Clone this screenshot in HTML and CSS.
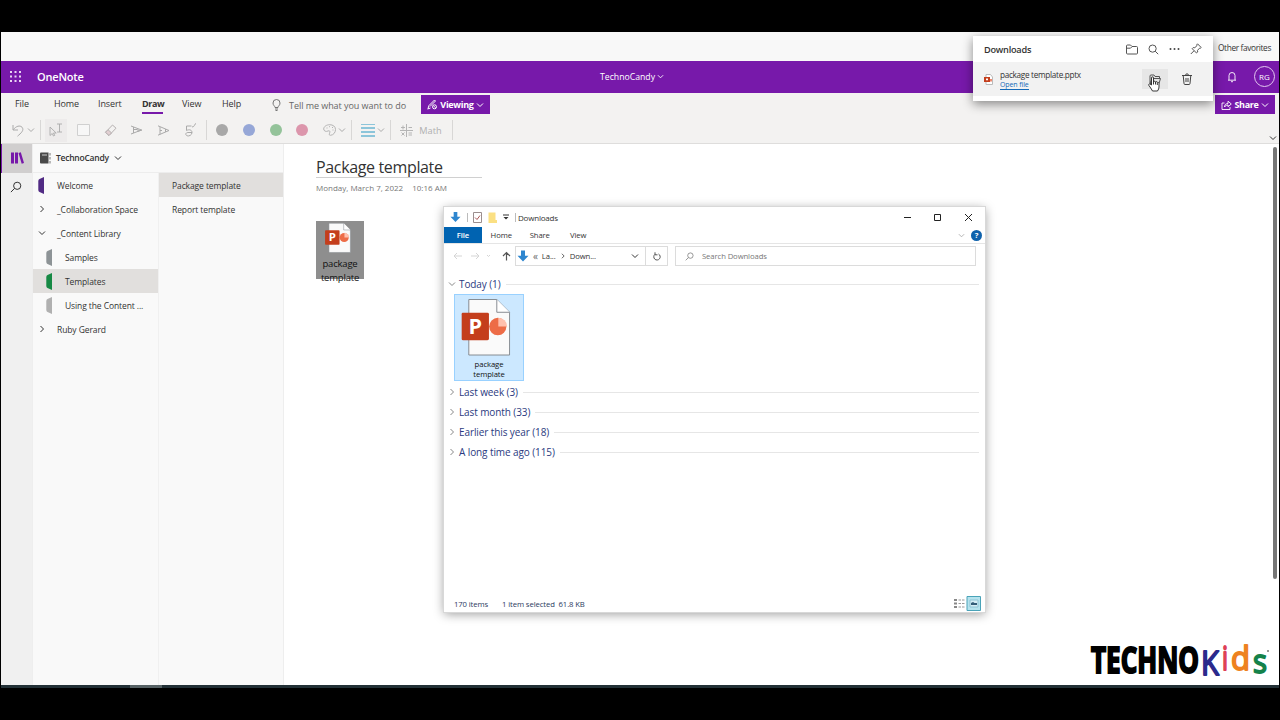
FILE: index.html
```html
<!DOCTYPE html>
<html lang="en">
<head>
    <meta charset="UTF-8">
    <meta name="viewport" content="width=device-width, initial-scale=1.0">
    <title>OneNote - TechnoCandy</title>
    <link rel="stylesheet" href="styles.css">
</head>
<body>

<svg width="0" height="0" class="defs">
    <symbol id="down" viewBox="0 0 8 8"><path d="M1 2.5l3 3 3-3" fill="none" stroke="currentColor"/></symbol>
    <symbol id="right" viewBox="0 0 8 8"><path d="M2.5 1l3 3-3 3" fill="none" stroke="currentColor"/></symbol>
    <symbol id="tab" viewBox="0 0 6 17"><path d="M6 0L1.500 2Q.3 2.500 .3 4v9q0 1.500 1.200 2L6 17z" fill="currentColor"/></symbol>
    <symbol id="lens" viewBox="0 0 12 12"><g fill="none" stroke="currentColor"><circle cx="7.2" cy="4.8" r="3.6"/><path d="M4.5 7.5L.9 11.1"/></g></symbol>
    <symbol id="arrow" viewBox="0 0 12 12"><path d="M4 .5h4v5.300h3.500L6 11.500.5 5.800H4z" fill="#2e86cf"/></symbol>
    <symbol id="ppt" viewBox="0 0 50 58">
        <path d="M7.500 .5h28.500l13 13v43.500h-41.500z" fill="#fafafa" stroke="#858a90"/>
        <path d="M36 .5v13h13" fill="#fff" stroke="#858a90"/>
        <circle cx="37" cy="28" r="8.800" fill="#ed6c47"/>
        <path d="M37.500 28v-9a9 9 0 0 1 9 9z" fill="#ffc0ad"/>
        <rect x="0" y="14" width="28" height="28" rx="1.500" fill="#c43e1c"/>
    </symbol>
</svg>

<div class="screen">
    <div class="browser-bar"><span>Other favorites</span></div>

    <header class="topbar">
        <svg class="waffle" width="11" height="11" viewBox="0 0 11 11" fill="#e9d5f3"><path d="M0 0h2v2H0zM4.500 0h2v2h-2zM9 0h2v2H9zM0 4.500h2v2H0zM4.500 4.500h2v2h-2zM9 4.500h2v2H9zM0 9h2v2H0zM4.500 9h2v2h-2zM9 9h2v2H9z"/></svg>
        <span class="app-name">OneNote</span>
        <span class="notebook-title">TechnoCandy <svg width="7" height="7"><use href="#down"/></svg></span>
        <svg class="bell" width="10" height="12" viewBox="0 0 10 12" fill="none" stroke="#fff" stroke-width=".9"><path d="M1 9.200h8M2 9V4.500a3 3 0 0 1 6 0V9M4 10.700h2"/></svg>
        <span class="avatar">RG</span>
    </header>

    <nav class="tabs">
        <span>File</span><span>Home</span><span>Insert</span><span class="active">Draw</span><span>View</span><span>Help</span>
        <svg width="9" height="12" viewBox="0 0 9 12" fill="none" stroke="#666" stroke-width=".9"><path d="M3 8.500C3 7 1 6.500 1 4a3.500 3.500 0 0 1 7 0c0 2.500-2 3-2 4.500zM3 10h3M3.500 11.500h2"/></svg>
        <span class="tell">Tell me what you want to do</span>
        <span class="viewing">
            <svg width="11" height="11" viewBox="0 0 11 11" fill="none" stroke="#fff"><path d="M1 9.500l1-3L7.500 1l1 1L3 7.500M.5 10l3-1"/><circle cx="7.500" cy="7.800" r="2"/><path d="M6.500 6.800l2 2"/></svg>
            Viewing
            <svg width="8" height="8"><use href="#down"/></svg>
        </span>
        <span class="share">
            <svg width="11" height="10" viewBox="0 0 11 10" fill="none" stroke="#fff" stroke-width=".9"><path d="M3.500 3H1v6.500h8V7M3.500 7c0-2.500 1.500-3.500 3.500-3.500V1.200L10.300 4 7 6.700V5C5.500 5 4.500 5.500 3.500 7z"/></svg>
            Share
            <svg width="8" height="8"><use href="#down"/></svg>
        </span>
    </nav>

    <div class="tools">
        <svg width="13" height="13" viewBox="0 0 13 13" fill="none" stroke="#aaa"><path d="M1 1v5h5M1.300 5.700C4 2 8 1 10 3.200c2.500 3-1 6-4.500 9"/></svg>
        <svg width="8" height="8" class="pale"><use href="#down"/></svg>
        <i class="sep"></i>
        <span class="picked"><svg width="14" height="14" viewBox="0 0 14 14" fill="none" stroke="#a9a9a9" stroke-width=".9"><path d="M1 4v8.500l2.200-2 1.300 2.500 1.200-.6-1.200-2.400h2.700zM8 1h5M8 9h5M10.500 1v8"/></svg></span>
        <svg width="13" height="12" viewBox="0 0 13 12" fill="#f7f7f7" stroke="#d0d0d0"><path d="M.5.5h12v11H.5z"/></svg>
        <svg width="13" height="13" viewBox="0 0 13 13" fill="none" stroke="#b5b0b0"><path d="M8.500 1L12 4.200 5 11.500 1.500 8.300z"/><path d="M4 5.700l3.500 3.200L5 11.500 1.500 8.300z" fill="#e2cfd2"/></svg>
        <svg width="13" height="10" viewBox="0 0 13 10" fill="none" stroke="#aaa"><path d="M1 1l10.500 4L1 9M3.500 2v6M3.500 4.500h4M8 4.200v2l4-1.200"/></svg>
        <svg width="13" height="11" viewBox="0 0 13 11" fill="none" stroke="#aaa"><path d="M1 .8l11 4.700L1 10.200M3 2v7.500M3 5.500h2M8.500 4v3"/></svg>
        <svg width="13" height="14" viewBox="0 0 13 14" fill="none" stroke="#aaa"><path d="M7.500 3H2.500v4.500c3-1.500 5.500-.5 5.500 2S5 13.500 3.200 12.800C1 12 1.500 9.500 4 9.500h4M8 4c3 0 2-3 4-3.500"/></svg>
        <i class="sep"></i>
        <b class="pen gray"></b>
        <b class="pen blue"></b>
        <b class="pen green"></b>
        <b class="pen pink"></b>
        <svg class="palette" width="14" height="12" viewBox="0 0 14 12" fill="none" stroke="#b3b3b3"><path d="M5 7C3 8 .7 7 .7 5c0-2.500 3-4.300 6-4.300C10 .7 12.500 2.500 12.500 5.500s-2 5.500-5 5.800c-2 .1-1-1.800-.7-3S6.500 6.300 5 7z"/><path d="M3.500 4h1M6 2.700h1M9 3.500h1M9.500 6h1"/></svg>
        <svg width="8" height="8" class="pale"><use href="#down"/></svg>
        <i class="sep"></i>
        <svg class="lines" width="14" height="13" viewBox="0 0 14 13" fill="#8cc5da"><path d="M0 0h14v1H0zM0 3h14v2H0zM0 7h14v2H0zM0 11h14v2H0z"/></svg>
        <svg width="8" height="8" class="pale"><use href="#down"/></svg>
        <i class="sep"></i>
        <svg width="13" height="13" viewBox="0 0 13 13" fill="none" stroke="#b5b5b5"><path d="M0 6.500h13M6.500 0v13M1 3.500h4M3 1.500v4M8.500 3.500H12M1.500 8.500l3 3M4.500 8.500l-3 3M8.500 9h3.500M8.500 11H12"/></svg>
        <span class="math">Math</span>
        <i class="sep"></i>
        <svg width="8" height="8" class="collapse"><use href="#down"/></svg>
    </div>

    <div class="workspace">
        <aside class="rail">
            <div class="rail-on"><svg width="13" height="12" viewBox="0 0 13 12" fill="#7719aa"><path d="M0 .5h3v11H0zM4 .5h3v11H4zM7.500 1L9.800.3 13 11l-2.300.7z"/></svg></div>
            <svg width="12" height="12" class="rail-lens"><use href="#lens"/></svg>
        </aside>

        <aside class="nav">
            <div class="notebook">
                <svg width="11" height="12" viewBox="0 0 11 12"><path d="M0 1.500Q0 .5 1 .5h7.500v11H1q-1 0-1-1z" fill="#4a4a4a"/><path d="M2 3h5" stroke="#ccc"/><path d="M10 1v2.500M10 5v2.500M10 9v2.500" stroke="#777"/></svg>
                <span>TechnoCandy</span>
                <svg width="8" height="8"><use href="#down"/></svg>
            </div>
            <div class="lists">
                <div class="sections">
                    <div class="row purple"><svg width="6" height="17"><use href="#tab"/></svg><span>Welcome</span></div>
                    <div class="row"><svg width="8" height="8"><use href="#right"/></svg><span>_Collaboration Space</span></div>
                    <div class="row"><svg width="8" height="8"><use href="#down"/></svg><span>_Content Library</span></div>
                    <div class="row child slate"><svg width="6" height="17"><use href="#tab"/></svg><span>Samples</span></div>
                    <div class="row child leaf on"><svg width="6" height="17"><use href="#tab"/></svg><span>Templates</span></div>
                    <div class="row child silver"><svg width="6" height="17"><use href="#tab"/></svg><span>Using the Content ...</span></div>
                    <div class="row"><svg width="8" height="8"><use href="#right"/></svg><span>Ruby Gerard</span></div>
                </div>
                <div class="pages">
                    <div class="page on">Package template</div>
                    <div class="page">Report template</div>
                </div>
            </div>
        </aside>

        <main class="note">
            <h1>Package template</h1>
            <p class="date"><span>Monday, March 7, 2022</span><span>10:16 AM</span></p>
            <div class="attachment">
                <svg width="26" height="30" viewBox="0 0 50 58"><use href="#ppt"/><text x="14" y="35.500" text-anchor="middle" class="ppt-letter">P</text></svg>
                <span>package<br>template</span>
            </div>
        </main>
        <div class="scrollbar"></div>
    </div>
    <div class="taskbar"><i></i></div>

    <section class="explorer">
        <div class="title-bar">
            <svg width="11" height="12"><use href="#arrow"/></svg>
            <i></i>
            <svg width="9" height="11" viewBox="0 0 9 11" fill="#fff" stroke="#9b8e8e"><path d="M.5.500h8v10h-8z"/><path d="M2 5.500l2 2 3-4" stroke="#a55" fill="none"/></svg>
            <svg width="9" height="11" viewBox="0 0 9 11"><path d="M.5.500h7V8H9v3H.5z" fill="#fbe083"/></svg>
            <svg width="6" height="6" viewBox="0 0 6 6"><path d="M0 .5h6v1H0zM.5 3h5L3 5.500z" fill="#333"/></svg>
            <i></i>
            <span>Downloads</span>
            <svg class="controls" width="68" height="9" viewBox="0 0 68 9" fill="none" stroke="#222"><path d="M0 4.500h7M30.500 1.500h6v6h-6zM61 1l7 7M68 1l-7 7"/></svg>
        </div>
        <div class="menu">
            <span class="file">File</span><span>Home</span><span>Share</span><span>View</span>
            <svg width="7" height="7"><use href="#down"/></svg>
            <b>?</b>
        </div>
        <div class="address">
            <svg class="arrows" width="60" height="10" viewBox="0 0 60 10" fill="none" stroke="#d5d5d5"><path d="M9 5H1M4 2L1 5l3 3M18 5h8M23 2l3 3-3 3M34 4l1.500 1.500L37 4"/><path d="M53.500 9.500V1.500M50 5l3.500-3.500L57 5" stroke="#555" stroke-width="1.200"/></svg>
            <div class="path">
                <svg width="12" height="12"><use href="#arrow"/></svg>
                <span class="q">«</span><span>La...</span><svg width="6" height="6"><use href="#right"/></svg><span>Down...</span>
                <svg width="8" height="8" class="drop"><use href="#down"/></svg>
            </div>
            <div class="refresh"><svg width="8" height="9" viewBox="0 0 8 9" fill="none" stroke="#555"><path d="M2 2.300A3.200 3.200 0 1 0 5.500 2M2 .3v2.500h2.500"/></svg></div>
            <div class="search"><svg width="9" height="9"><use href="#lens"/></svg><span>Search Downloads</span></div>
        </div>
        <div class="group first"><svg width="8" height="8"><use href="#down"/></svg><span>Today (1)</span><hr></div>
        <div class="tile">
            <svg width="50" height="57" viewBox="0 0 50 58"><use href="#ppt"/><text x="14" y="35.500" text-anchor="middle" class="ppt-letter">P</text></svg>
            <span>package<br>template</span>
        </div>
        <div class="group"><svg width="8" height="8"><use href="#right"/></svg><span>Last week (3)</span><hr></div>
        <div class="group"><svg width="8" height="8"><use href="#right"/></svg><span>Last month (33)</span><hr></div>
        <div class="group"><svg width="8" height="8"><use href="#right"/></svg><span>Earlier this year (18)</span><hr></div>
        <div class="group"><svg width="8" height="8"><use href="#right"/></svg><span>A long time ago (115)</span><hr></div>
        <div class="status">
            <span>170 items</span><span>1 item selected&nbsp; 61.8 KB</span>
            <svg width="28" height="15" viewBox="0 0 28 15"><path d="M1 4h3M1 7.500h3M1 11h3" stroke="#888" stroke-width="2"/><path d="M5.500 4h6M5.500 7.500h6M5.500 11h6" stroke="#999" stroke-dasharray="2.500 1"/><path d="M14 .5h13.500v14H14z" fill="#b5e3ee" stroke="#4aa3b8"/><path d="M17 4h8v7h-8z" fill="#d5edf5" stroke="#8fc3d4"/><path d="M18 9V7l2-1 1.500 1H24v2z" fill="#345d78"/></svg>
        </div>
    </section>

    <section class="downloads">
        <div class="dl-head">
            <span>Downloads</span>
            <svg width="12" height="11" viewBox="0 0 12 11" fill="none" stroke="#555"><path d="M.5 9V2q0-1 1-1h3L6 2.500h4.500q1 0 1 1V9q0 1-1 1h-9q-1 0-1-1zM.5 4.200h4L6 2.700"/></svg>
            <svg width="11" height="11" viewBox="0 0 11 11" fill="none" stroke="#555"><circle cx="4.600" cy="4.600" r="3.600"/><path d="M7.200 7.200l3 3"/></svg>
            <svg width="11" height="11" viewBox="0 0 11 11" fill="#444"><circle cx="1.500" cy="5" r="1"/><circle cx="5.500" cy="5" r="1"/><circle cx="9.500" cy="5" r="1"/></svg>
            <svg width="12" height="12" viewBox="0 0 12 12" fill="none" stroke="#555"><path d="M7.500.8l3.700 3.700-1 .8-.7-.1-2 2.200.2 1.600-1.200 1L2.200 5.700l1-1.100 1.600.1L7 2.600l-.2-.8zM4 7.800L.8 11"/></svg>
        </div>
        <div class="dl-item">
            <svg width="9" height="11" viewBox="0 0 9 11"><path d="M2 .5h4.500L8.500 3v7.500H2z" fill="#fff" stroke="#bbb"/><path d="M0 3h6v5H0z" fill="#c43e1c"/><path d="M2 4.500h2v1.700H2z" fill="#fff"/><path d="M6 5h2v2.500H6z" fill="#ed8a70"/></svg>
            <p><span>package template.pptx</span><a>Open file</a></p>
            <div class="folder-btn">
                <svg width="12" height="11" viewBox="0 0 12 11" fill="none" stroke="#555"><path d="M1 9V2q0-1 1-1h3l1 1.500h4.500V5M1 9.500L3 4.500h8.500L10 9.500z"/></svg>
                <svg class="hand" width="12" height="16" viewBox="0 0 12 16" fill="#fff" stroke="#222" stroke-width=".9"><path d="M3.500 9V2q0-1.200 1-1.200t1 1.200v4q.2-.8 1-.8t1 .9q.3-.6 1-.5.800.1.800 1 .3-.4.900-.3.800.2.800 1.200v3.500q0 2-1.500 4h-5C3.500 13 2 11 .8 9.300.3 8.500 1.200 7.500 2 8zM5.500 6v2.500M7.500 6v2.500M9.300 7v2"/></svg>
            </div>
            <svg width="10" height="12" viewBox="0 0 10 12" fill="none" stroke="#444"><path d="M0 2.500h10M3.500 2.500q0-1.700 1.500-1.700t1.500 1.700M1.200 2.500l.8 8q.1 1 1 1h4q.9 0 1-1l.8-8M4 5v4M6 5v4"/></svg>
        </div>
    </section>

    <svg class="brand" width="184" height="52" viewBox="0 0 184 52">
        <text x="2" y="38" textLength="108" lengthAdjust="spacingAndGlyphs" class="techno">TECHNO</text>
        <g class="kids">
            <text x="112" y="40" textLength="18" lengthAdjust="spacingAndGlyphs" fill="#2b2a8c" stroke="#2b2a8c">K</text>
            <text x="133" y="35" textLength="6" lengthAdjust="spacingAndGlyphs" fill="#de3f55" stroke="#de3f55">i</text>
            <text x="142" y="35" textLength="19" lengthAdjust="spacingAndGlyphs" fill="#ee8220" stroke="#ee8220">d</text>
            <text x="164" y="38" textLength="14" lengthAdjust="spacingAndGlyphs" fill="#14824a" stroke="#14824a">s</text>
        </g>
        <circle cx="179" cy="16" r="1" fill="#777"/>
    </svg>
</div>

</body>
</html>
```
FILE: styles.css
```css
* {
    box-sizing: border-box;
}
body {
    margin: 0;
    padding: 32px 1px;
    height: 720px;
    overflow: hidden;
    background-color: #000;
    font-family: "Open Sans", "Noto Sans", sans-serif;
    font-size: 8.5px;
    color: #333;
}
svg {
    display: block;
    flex: none;
}
span {
    white-space: nowrap;
}
.defs {
    position: absolute;
}
.ppt-letter {
    font: bold 22px "Open Sans", sans-serif;
    fill: #fff;
}
.screen {
    position: relative;
    height: 656px;
    display: flex;
    flex-direction: column;
    background-color: #fff;
}
.browser-bar {
    height: 29px;
    padding: 10px 8px 0 0;
    text-align: right;
    background-color: #f8f8f8;
    font-size: 8.3px;
    letter-spacing: -.35px;
}

/* purple header */
.topbar {
    height: 32px;
    display: flex;
    align-items: center;
    padding: 0 4px 1px 9px;
    background-color: #7719aa;
    color: #fff;
}
.app-name {
    margin-left: 16px;
    width: 563px;
    font-size: 11px;
    font-weight: 600;
    letter-spacing: -.2px;
}
.notebook-title {
    display: flex;
    align-items: center;
    gap: 2px;
    font-size: 8.7px;
}
.bell {
    margin-left: auto;
    margin-right: 17px;
}
.avatar {
    width: 21px;
    height: 21px;
    border: 1px solid #e3c8f0;
    border-radius: 50%;
    text-align: center;
    line-height: 20px;
    font-size: 8px;
}

/* ribbon */
.tabs {
    height: 25px;
    display: grid;
    grid-template-columns: 39px 44px 44px 40px 40px 50px 17px 132px 69px 1fr;
    align-items: center;
    padding: 0 0 2px 14px;
    background-color: #f3f2f1;
    font-size: 9px;
    letter-spacing: -.1px;
}
.tabs > span {
    height: 20px;
    line-height: 18px;
}
.tabs .active {
    width: 21px;
    font-weight: 700;
    letter-spacing: -.4px;
    border-bottom: 2px solid #7719aa;
    line-height: 18px;
    height: 19px;
}
.tabs .tell {
    color: #666;
    line-height: 21px;
    letter-spacing: -.05px;
}
.tabs .viewing, .tabs .share {
    display: flex;
    align-items: center;
    justify-content: center;
    gap: 2px;
    height: 19px;
    background-color: #7719aa;
    color: #fff;
    font-weight: 700;
    letter-spacing: -.3px;
}
.tabs .share {
    width: 60px;
    justify-self: end;
    margin-right: 4px;
}
.tools {
    height: 26px;
    display: grid;
    grid-template-columns: 16px 10px 9px 22px 32px 22px 30px 24px 30px 2px 30px 24px 30px 22px 24px 10px 8px 21px 10px 8px 24px 25px 18px 1fr;
    align-items: center;
    justify-items: center;
    padding: 0 0 1px 9px;
    background-color: #f3f2f1;
    border-bottom: 1px solid #dedddc;
}
.pale {
    color: #aaa;
}
.sep {
    width: 1px;
    height: 20px;
    background-color: #d8d7d6;
}
.picked {
    width: 22px;
    height: 23px;
    display: grid;
    place-items: center;
    background-color: #edebeb;
}
.pen {
    width: 12px;
    height: 12px;
    border-radius: 50%;
}
.gray {
    background-color: #a8a8a8;
}
.blue {
    background-color: #96a7d7;
}
.green {
    background-color: #94c39a;
}
.pink {
    background-color: #dc96ac;
}
.palette {
    margin-left: 10px;
}
.lines {
    margin-left: 5px;
}
.math {
    color: #b0b0b0;
    font-size: 9.2px;
}
.collapse {
    justify-self: end;
    align-self: end;
    margin-right: 2px;
}

/* notebook area */
.workspace {
    height: 541px;
    display: flex;
}
.rail {
    width: 31px;
    background-color: #f0f0f0;
}
.rail-on {
    height: 29px;
    display: grid;
    place-items: center;
    padding: 0 0 1px 0;
    background-color: #d0cece;
    border-left: 1px solid #7719aa;
}
.rail-lens {
    margin: 8px 0 0 9px;
}
.nav {
    width: 252px;
    background-color: #f9f9f9;
    border-right: 1px solid #eee;
    border-left: 1px solid #eee;
    display: flex;
    flex-direction: column;
}
.notebook {
    height: 29px;
    display: flex;
    align-items: center;
    padding: 0 0 1px 7px;
    border-bottom: 1px solid #ededed;
    font-weight: 600;
}
.notebook span {
    margin: 0 5px 0 5px;
    letter-spacing: -.25px;
}
.lists {
    flex: 1;
    display: flex;
    letter-spacing: -.1px;
}
.sections {
    width: 126px;
    border-right: 1px solid #f0f0f0;
}
.row {
    height: 24px;
    display: flex;
    align-items: center;
    padding-left: 5px;
}
.row svg + span {
    margin-left: 11px;
}
.row svg[width="6"] + span {
    margin-left: 13px;
}
.row.child {
    padding-left: 13px;
}
.purple svg {
    color: #512b84;
}
.slate svg {
    color: #8d9396;
}
.leaf svg {
    color: #168944;
}
.silver svg {
    color: #b0b0b0;
}
.on {
    background-color: #e1dfdd;
}
.pages {
    flex: 1;
}
.page {
    height: 24px;
    line-height: 25px;
    padding-left: 13px;
}
.note {
    flex: 1;
    padding: 12px 0 0 32px;
}
.note h1 {
    width: 166px;
    height: 22px;
    margin: 0;
    border-bottom: 1px solid #d0d0d0;
    font: 16px/22px "Open Sans", sans-serif;
    letter-spacing: -.35px;
    white-space: nowrap;
}
.date {
    margin: 3px 0 0;
    display: flex;
    gap: 9px;
    color: #777;
    line-height: 13px;
    font-size: 8px;
}
.attachment {
    width: 48px;
    height: 58px;
    margin-top: 27px;
    display: flex;
    flex-direction: column;
    align-items: center;
    padding-top: 2px;
    background-color: #8e8e8e;
    color: #111;
    text-align: center;
    font-size: 9.5px;
    letter-spacing: -.2px;
    line-height: 14px;
}
.attachment svg {
    margin: 0 4px 4px 0;
}
.scrollbar {
    width: 4px;
    height: 432px;
    margin: 3px 2px 0 0;
    border-radius: 2px;
    background-color: #777;
}
.taskbar {
    height: 3px;
    background-color: #223036;
}
.taskbar i {
    display: block;
    width: 32px;
    height: 3px;
    margin-left: 129px;
    background-color: #566164;
}

/* file explorer window */
.explorer {
    position: absolute;
    left: 443px;
    top: 175px;
    width: 541px;
    height: 405px;
    display: flex;
    flex-direction: column;
    background-color: #fff;
    box-shadow: 0 0 0 1px #d8d8d8, 0 2px 10px rgba(0, 0, 0, .4);
    font-size: 7.7px;
    letter-spacing: -.1px;
}
.title-bar {
    height: 20px;
    display: flex;
    align-items: center;
    gap: 6px;
    padding: 0 13px 0 6px;
}
.title-bar i {
    width: 1px;
    height: 9px;
    margin-right: -1px;
    background-color: #bbb;
}
.title-bar i + span {
    margin-left: -3px;
    font-size: 8px;
    letter-spacing: -.2px;
}
.controls {
    margin-left: auto;
}
.menu {
    height: 17px;
    display: flex;
    align-items: center;
    padding-right: 3px;
    border-bottom: 1px solid #e5e5e5;
}
.menu span {
    width: 38.5px;
    text-align: center;
}
.menu .file {
    width: 38px;
    height: 16px;
    line-height: 16px;
    background-color: #0063b1;
    color: #fff;
    font-weight: 600;
}
.menu svg {
    margin-left: auto;
    margin-right: 6px;
    color: #aaa;
}
.menu b {
    width: 11px;
    height: 11px;
    border-radius: 50%;
    background-color: #0f62ac;
    color: #fff;
    text-align: center;
    line-height: 11px;
}
.address {
    height: 20px;
    display: flex;
    align-items: center;
    margin: 2px 9px 0 9px;
}
.path, .refresh, .search {
    height: 20px;
    border: 1px solid #dcdcdc;
    display: flex;
    align-items: center;
}
.path {
    width: 131px;
    margin-left: 2px;
    padding: 0 6px 0 1px;
    gap: 4px;
}
.path .q {
    color: #666;
    font-size: 10px;
    line-height: 10px;
}
.drop {
    margin-left: auto;
}
.refresh {
    width: 22px;
    border-left: 0;
    justify-content: center;
}
.search {
    flex: 1;
    margin-left: 7px;
    padding-left: 9px;
    gap: 8px;
    color: #777;
}
.group {
    height: 20px;
    display: flex;
    align-items: center;
    padding: 0 6px 0 4px;
    color: #2b3a80;
    font-size: 10px;
}
.group svg {
    margin-right: 3px;
    color: #888;
}
.group hr {
    flex: 1;
    margin: 0 0 0 5px;
    border: 0;
    border-top: 1px solid #e6e6e6;
}
.first {
    margin-top: 8px;
}
.tile {
    width: 70px;
    height: 87px;
    margin: 0 0 1px 10px;
    display: flex;
    flex-direction: column;
    align-items: center;
    padding-top: 4px;
    background-color: #cce8ff;
    border: 1px solid #99d1ff;
    color: #111;
    text-align: center;
    line-height: 10px;
}
.tile svg {
    margin: 0 7px 3px 0;
}
.status {
    height: 17px;
    margin-top: auto;
    display: flex;
    align-items: center;
    gap: 14px;
    padding: 0 4px 0 10px;
    color: #2b3a60;
}
.status svg {
    margin-left: auto;
}

/* browser downloads flyout */
.downloads {
    position: absolute;
    left: 972px;
    top: 4px;
    width: 240px;
    height: 65px;
    background-color: #fff;
    box-shadow: 0 3px 10px rgba(0, 0, 0, .45);
}
.dl-head {
    height: 26px;
    display: flex;
    align-items: center;
    gap: 10px;
    padding: 0 11px 0 11px;
    font-size: 9.2px;
}
.dl-head span {
    margin-right: auto;
    font-weight: 600;
    letter-spacing: -.25px;
}
.dl-item {
    height: 34px;
    display: flex;
    align-items: center;
    padding: 0 21px 0 11px;
    background-color: #f2f2f2;
}
.dl-item p {
    margin: 0 auto 0 7px;
    display: flex;
    flex-direction: column;
    align-items: flex-start;
    line-height: 11px;
    font-size: 8.2px;
    letter-spacing: -.3px;
}
.dl-item a {
    color: #1469b8;
    font-size: 7px;
    line-height: 9px;
    letter-spacing: -.1px;
    border-bottom: 1px solid #1469b8;
}
.folder-btn {
    position: relative;
    width: 26px;
    height: 20px;
    margin-right: 14px;
    display: grid;
    place-items: center;
    background-color: #e6e6e6;
}
.hand {
    position: absolute;
    left: 6px;
    top: 7px;
}

/* video logo */
.brand {
    position: absolute;
    right: 6px;
    bottom: 1px;
    overflow: visible;
}
.techno {
    font: bold 35px "Open Sans", sans-serif;
    stroke: #000;
    stroke-width: 2px;
}
.kids {
    font: 33px "Open Sans", sans-serif;
    stroke-width: 1.8px;
    stroke-linejoin: round;
}
```
